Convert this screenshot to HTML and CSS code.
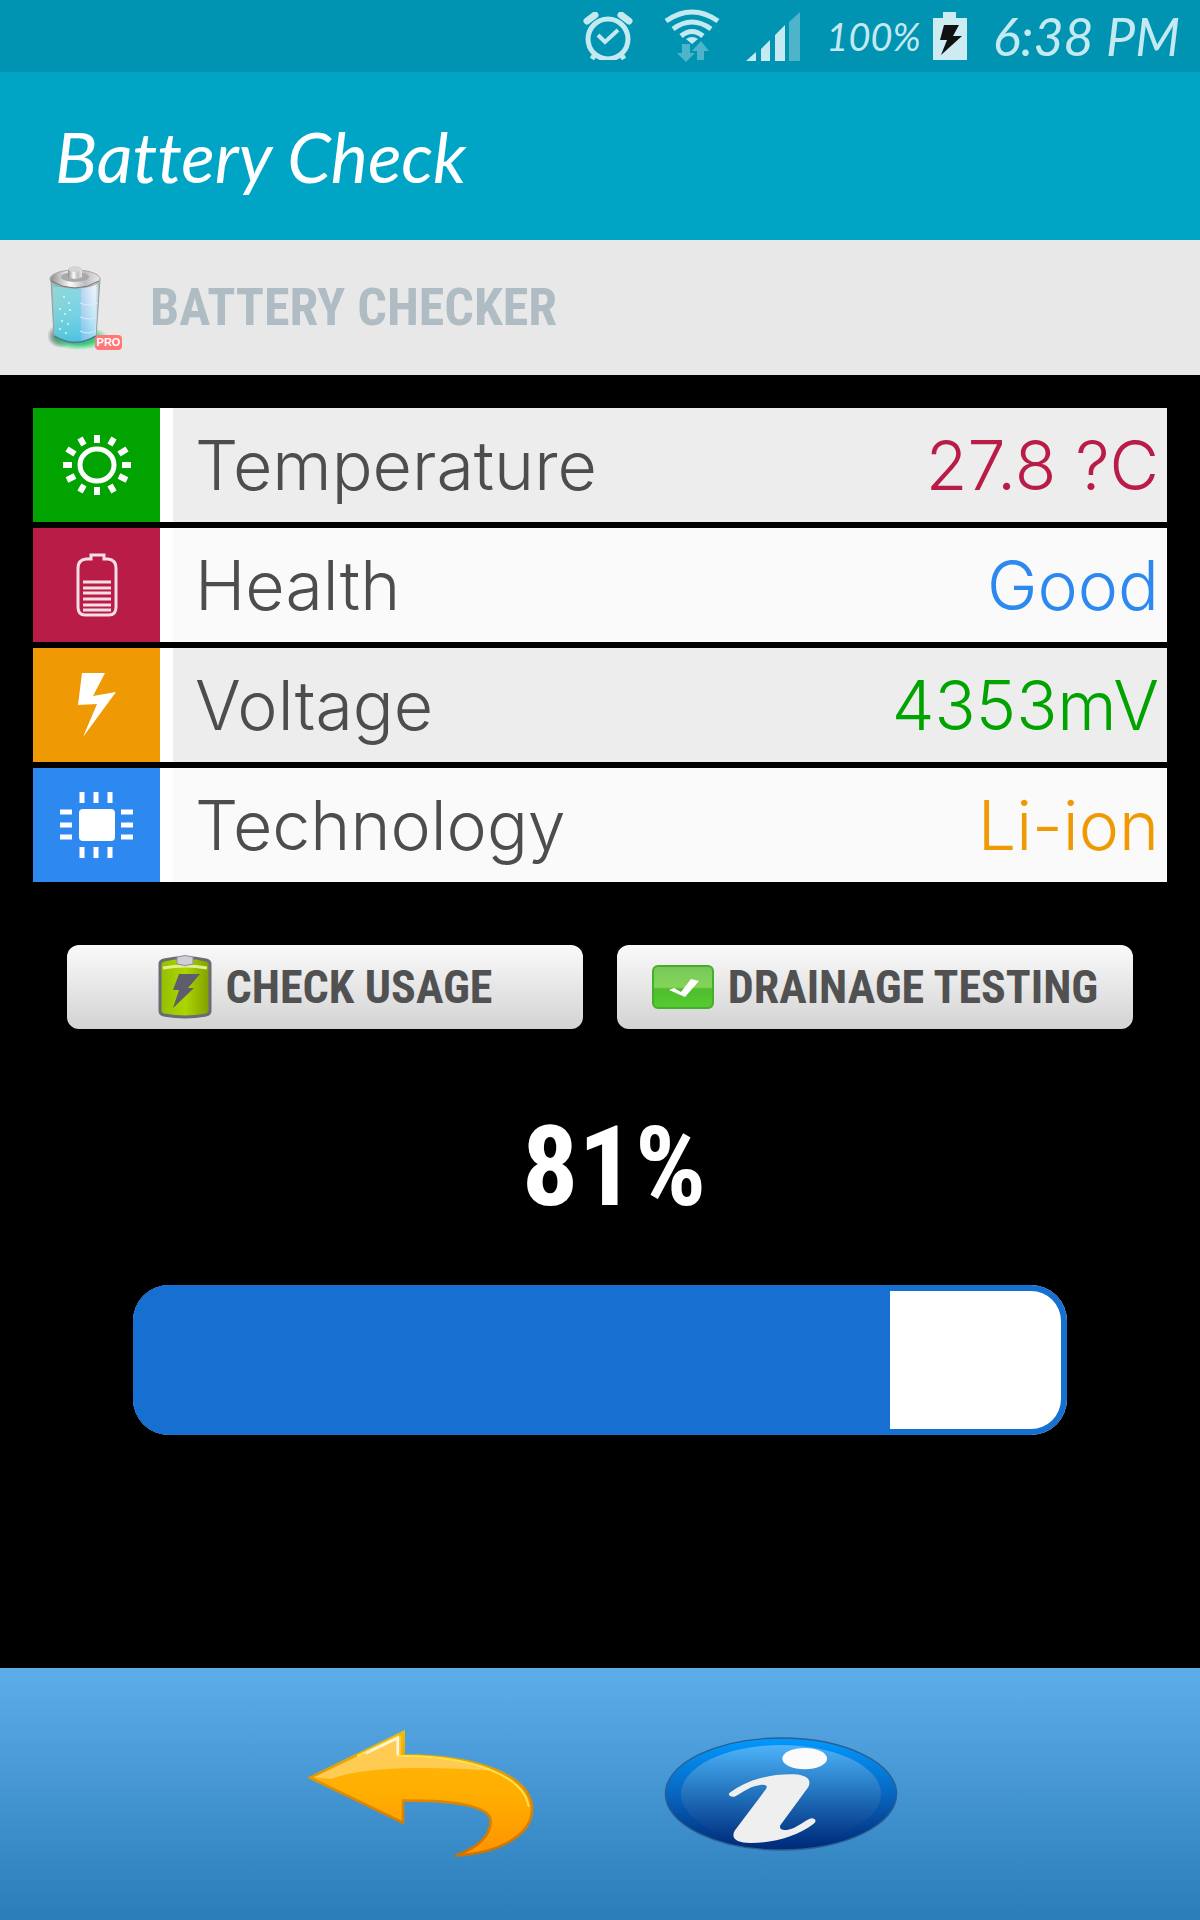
FILE: index.html
```html
<!DOCTYPE html>
<html lang="en">
<head>
    <meta charset="UTF-8">
    <meta name="viewport" content="width=device-width, initial-scale=1.0">
    <title>Battery Check</title>
    <link rel="stylesheet" href="styles.css">
</head>
<body>
    <div class="status-bar">
        <svg class="icon-alarm" width="50" height="48" viewBox="0 0 50 48" fill="none" stroke="#C4E9F0">
            <circle cx="25" cy="27" r="20" stroke-width="5"/>
            <path d="M15 23l7 7 13-12" stroke-width="4"/>
            <path d="M4 9l8-6M46 9l-8-6" stroke-width="7" stroke-linecap="round"/>
            <path d="M12 42l-3 5M38 42l3 5" stroke-width="5"/>
        </svg>
        <svg class="icon-wifi" width="56" height="54" viewBox="0 0 56 54" fill="none" stroke="#C4E9F0" stroke-width="5">
            <path d="M2 12Q28 -6 54 12"/>
            <path d="M9 20Q28 6 47 20"/>
            <path d="M17 27Q28 18 39 27"/>
            <path d="M22 30Q28 26 34 30L28 35z" fill="#C4E9F0" stroke="none"/>
            <path d="M18 35h8v9h5l-9 9-9-9h5zM33 51v-9h-5l9-10 8 10h-5v9z" fill="#4DB4CA" stroke="none"/>
        </svg>
        <svg class="icon-signal" width="54" height="49" viewBox="0 0 54 49" fill="#C4E9F0">
            <path d="M0 49l10-9v9zM15 37l9-9v21h-9zM29 23l10-10v36H29z"/>
            <path d="M43 10L54 0v49H43z" fill="#4DB4CA"/>
        </svg>
        <span class="charge">100%</span>
        <svg class="icon-charging" width="34" height="48" viewBox="0 0 34 48">
            <path d="M0 6h10V0h13v6h11v42H0z" fill="#CDECF2"/>
            <path d="M11 13h15l-6 11h9L8 43l6-15H7z" fill="#111"/>
        </svg>
        <span class="clock">6:38 PM</span>
    </div>

    <header class="app-bar">
        <h1>Battery Check</h1>
    </header>

    <div class="section-head">
        <div class="logo">
            <svg width="64" height="86" viewBox="0 0 64 86">
                <defs>
                    <linearGradient id="glass" x1="0" x2="1">
                        <stop offset="0" stop-color="#A9BEC2"/>
                        <stop offset=".1" stop-color="#6FCDCB"/>
                        <stop offset=".6" stop-color="#69CBE0"/>
                        <stop offset=".62" stop-color="#A9C9EC"/>
                        <stop offset=".9" stop-color="#E8F2FC"/>
                        <stop offset="1" stop-color="#A0AAB0"/>
                    </linearGradient>
                    <linearGradient id="liquid" x1="0" y1="0" x2="0" y2="1">
                        <stop offset="0" stop-color="#FFFFFF" stop-opacity=".2"/>
                        <stop offset="1" stop-color="#22B8E8" stop-opacity=".45"/>
                    </linearGradient>
                    <linearGradient id="metal" x1="0" x2="1">
                        <stop offset="0" stop-color="#8E8E8E"/>
                        <stop offset=".4" stop-color="#FAFAFA"/>
                        <stop offset=".7" stop-color="#BDBDBD"/>
                        <stop offset="1" stop-color="#E9E9E9"/>
                    </linearGradient>
                    <radialGradient id="glow">
                        <stop offset=".5" stop-color="#1ED56E"/>
                        <stop offset="1" stop-color="#1ED56E" stop-opacity="0"/>
                    </radialGradient>
                    <radialGradient id="shade">
                        <stop offset=".3" stop-color="#444" stop-opacity=".8"/>
                        <stop offset="1" stop-color="#444" stop-opacity="0"/>
                    </radialGradient>
                </defs>
                <ellipse cx="14" cy="71" rx="13" ry="12" fill="url(#shade)"/>
                <ellipse cx="33" cy="73" rx="30" ry="12" fill="url(#glow)"/>
                <path d="M5 14L8 72Q29 86 50 72L54 14z" fill="url(#glass)" stroke="#8FA0A5"/>
                <path d="M7 22L9 71Q29 83 49 71L52 22z" fill="url(#liquid)"/>
                <path d="M8 71Q29 84 50 71" fill="none" stroke="#4E7F86" stroke-width="2"/>
                <ellipse cx="29" cy="14" rx="25" ry="9" fill="url(#metal)" stroke="#A5A5A5"/>
                <path d="M5 16Q29 30 53 16" fill="none" stroke="#777"/>
                <ellipse cx="29" cy="12" rx="14" ry="5" fill="#A9A9A9"/>
                <path d="M22 4v8q7 4 14 0V4z" fill="url(#metal)"/>
                <ellipse cx="29" cy="4" rx="7" ry="3" fill="#D5D5D5"/>
                <path d="M34 38q9 4 18 0M34 52q9 4 17 0M34 66q8 4 16 0" fill="none" stroke="#DCEBFA"/>
                <g fill="#D8FAFA">
                    <circle cx="18" cy="32" r="1"/><circle cx="23" cy="38" r="1"/><circle cx="14" cy="44" r="1"/>
                    <circle cx="19" cy="49" r="1"/><circle cx="16" cy="56" r="1"/><circle cx="22" cy="59" r="1"/>
                    <circle cx="14" cy="64" r="1"/><circle cx="20" cy="68" r="1"/><circle cx="24" cy="45" r="1"/>
                </g>
            </svg>
            <span class="pro">PRO</span>
        </div>
        <h2>BATTERY CHECKER</h2>
    </div>

    <main>
        <table class="stats">
            <tr class="odd">
                <td class="tile green">
                    <svg width="68" height="60" viewBox="0 0 68 60" fill="none" stroke="#FFF" stroke-width="6">
                        <ellipse cx="34" cy="30" rx="17" ry="16" stroke-width="5"/>
                        <path d="M34 0v8M34 52v8M0 30h9M59 30h9M17 3l4 7M51 3l-4 7M17 57l4-7M51 57l-4-7M4 14l8 5M64 14l-8 5M4 45l8-4M64 45l-8-4"/>
                    </svg>
                </td>
                <th scope="row">Temperature</th>
                <td class="value red-text">27.8 ?C</td>
            </tr>
            <tr>
                <td class="tile red">
                    <svg width="42" height="64" viewBox="0 0 42 64" fill="none" stroke="#F6DEE5" stroke-width="3">
                        <path d="M15 6V2h13v4h4q8 1 8 9v39q0 8-7 8H9q-7 0-7-8V15q0-8 8-9z"/>
                        <path d="M7 29h28M7 35h28M7 40h28M7 46h28M7 52h28M7 57h28"/>
                    </svg>
                </td>
                <th scope="row">Health</th>
                <td class="value blue-text">Good</td>
            </tr>
            <tr class="odd">
                <td class="tile orange">
                    <svg width="38" height="64" viewBox="0 0 38 64" fill="#FFF">
                        <path d="M4 0h23L15 23l23-4L5 64 19 31 0 32z"/>
                    </svg>
                </td>
                <th scope="row">Voltage</th>
                <td class="value green-text">4353mV</td>
            </tr>
            <tr>
                <td class="tile blue">
                    <svg width="74" height="66" viewBox="0 0 74 66" fill="#FFF" stroke="#FFF">
                        <rect x="19" y="17" width="36" height="32" rx="4" stroke="none"/>
                        <path d="M22 0v11M36 0v11M50 0v11M22 55v11M36 55v11M50 55v11M0 20h12M0 33h12M0 45h12M61 20h12M61 33h12M61 45h12" stroke-width="5"/>
                    </svg>
                </td>
                <th scope="row">Technology</th>
                <td class="value orange-text">Li-ion</td>
            </tr>
        </table>

        <div class="actions">
            <button type="button">
                <svg width="54" height="64" viewBox="0 0 54 64">
                    <defs>
                        <linearGradient id="cell" x1="0" x2="1">
                            <stop offset="0" stop-color="#93BE00"/>
                            <stop offset=".5" stop-color="#ACD600"/>
                            <stop offset="1" stop-color="#7F9E00"/>
                        </linearGradient>
                    </defs>
                    <path d="M2 9Q2 6 6 5 27 0 48 5 52 6 52 9V56Q52 59 48 60 27 64 6 60 2 59 2 56z" fill="url(#cell)" stroke="#6B6B77" stroke-width="3"/>
                    <path d="M5 13Q27 9 49 13" fill="none" stroke="#E3F08A" stroke-width="3"/>
                    <path d="M19 2q8-3 16 0v7q-8 3-16 0z" fill="#CFCFD8" stroke="#8D8D99"/>
                    <path d="M21 19h21L30 33h6L15 53l6-18h-6z" fill="#5D5D6B"/>
                </svg>
                CHECK USAGE
            </button>
            <button type="button">
                <svg width="62" height="44" viewBox="0 0 62 44">
                    <defs>
                        <linearGradient id="tick" x1="0" y1="0" x2="0" y2="1">
                            <stop offset="0" stop-color="#76C75A"/>
                            <stop offset=".5" stop-color="#84D459"/>
                            <stop offset=".55" stop-color="#50BC2E"/>
                            <stop offset="1" stop-color="#55CC30"/>
                        </linearGradient>
                    </defs>
                    <rect x="1" y="1" width="60" height="42" rx="5" fill="url(#tick)" stroke="#45AE2A" stroke-width="2"/>
                    <path d="M17 25l5-2 7 4 10-13 8 2-14 16z" fill="#FFF"/>
                </svg>
                DRAINAGE TESTING
            </button>
        </div>

        <div class="level">81%</div>
        <div class="bar" role="progressbar" aria-label="Battery level" aria-valuenow="81" aria-valuemin="0" aria-valuemax="100">
            <div class="bar-fill" style="width: 81%"></div>
        </div>
    </main>

    <footer class="bottom-bar">
        <button type="button" aria-label="Back">
            <svg width="226" height="128" viewBox="52 62 678 384">
                <defs>
                    <linearGradient id="arrow" x1="0" y1="0" x2="0" y2="1">
                        <stop offset="0" stop-color="#FFB90A"/>
                        <stop offset=".5" stop-color="#FFAE00"/>
                        <stop offset="1" stop-color="#FF9300"/>
                    </linearGradient>
                    <linearGradient id="arrowEdge" x1="0" y1="0" x2="0" y2="1">
                        <stop offset="0" stop-color="#E8BE0C"/>
                        <stop offset=".5" stop-color="#DD8A05"/>
                        <stop offset="1" stop-color="#CF7200"/>
                    </linearGradient>
                </defs>
                <path d="M58 205L339 68v70C560 138 724 200 724 300 724 380 620 432 495 439 560 415 600 380 600 335 600 290 490 272 337 274v66z" fill="url(#arrow)" stroke="url(#arrowEdge)" stroke-width="8"/>
                <path d="M70 204L330 79v64C460 143 560 158 610 184 450 176 250 164 120 209z" fill="#FFCB52"/>
                <path d="M200 140L322 82v58h20C550 142 700 200 714 292" fill="none" stroke="#FFE14A" stroke-width="6"/>
                <path d="M225 132L321 86v52" fill="none" stroke="#FFF5DC" stroke-width="8"/>
            </svg>
        </button>
        <button type="button" aria-label="Info">
            <svg width="234" height="114" viewBox="39 80 702 342">
                <defs>
                    <linearGradient id="rim" x1="0" y1="0" x2="0" y2="1">
                        <stop offset="0" stop-color="#0099FF"/>
                        <stop offset=".5" stop-color="#0866BF"/>
                        <stop offset="1" stop-color="#002A75"/>
                    </linearGradient>
                    <linearGradient id="disc" x1="0" y1="0" x2="0" y2="1">
                        <stop offset="0" stop-color="#4DB3FA"/>
                        <stop offset=".5" stop-color="#2272BC"/>
                        <stop offset="1" stop-color="#002F80"/>
                    </linearGradient>
                </defs>
                <ellipse cx="390" cy="251" rx="347" ry="168" fill="url(#rim)" stroke="#2B5F92" stroke-width="4"/>
                <ellipse cx="390" cy="251" rx="300" ry="147" fill="url(#disc)"/>
                <ellipse cx="461" cy="145" rx="67" ry="32" fill="#FBFBFB"/>
                <path d="M236 247C285 210 350 192 420 192 462 192 484 204 472 230L388 345C382 360 402 364 430 352 455 340 470 325 484 324 496 326 496 334 488 340 440 376 370 398 300 398 255 398 238 384 252 360L345 236C354 222 336 220 310 228 280 238 262 256 250 259 236 260 230 253 236 247z" fill="#EFEFF0"/>
            </svg>
        </button>
    </footer>
</body>
</html>
```
FILE: styles.css
```css
* {
    box-sizing: border-box;
}
body {
    margin: 0;
    min-height: 100vh;
    display: flex;
    flex-direction: column;
    background-color: #000000;
    font-family: Inter, "Liberation Sans", sans-serif;
}
svg {
    display: block;
    flex: none;
}
button {
    border: none;
    cursor: pointer;
}

/* top bars */
.status-bar {
    height: 72px;
    padding-right: 20px;
    display: flex;
    justify-content: flex-end;
    align-items: center;
    background-color: #0094B2;
    color: #C4E9F0;
    font-family: Lato, sans-serif;
    font-style: italic;
}
.icon-wifi {
    margin-left: 31px;
}
.icon-signal {
    margin-left: 26px;
}
.charge {
    margin-left: 26px;
    font-size: 38px;
}
.icon-charging {
    margin-left: 12px;
}
.clock {
    margin-left: 26px;
    font-size: 52px;
}
.app-bar {
    height: 168px;
    padding: 0 55px;
    display: flex;
    align-items: center;
    background-color: #00A5C5;
}
h1 {
    margin: 0;
    color: #FFFFFF;
    font-family: Lato, sans-serif;
    font-size: 70px;
    font-style: italic;
    font-weight: normal;
    font-variant-ligatures: none;
}
.section-head {
    height: 135px;
    padding: 0 46px;
    display: flex;
    align-items: center;
    background-color: #E8E8E8;
}
.logo {
    position: relative;
    width: 76px;
    margin-right: 28px;
}
.pro {
    position: absolute;
    right: 0;
    bottom: 1px;
    width: 27px;
    border-radius: 4px;
    background-color: #FF7777;
    color: #FFFFFF;
    font: bold 11px/15px "Liberation Sans", sans-serif;
    text-align: center;
}
h2 {
    margin: 0;
    color: #B0BCC3;
    font-family: "Roboto Condensed", "Liberation Sans Narrow", sans-serif;
    font-size: 52px;
    font-weight: bold;
}

/* readings */
main {
    flex: 1;
    padding: 27px 33px;
}
.stats {
    width: 100%;
    border-collapse: separate;
    border-spacing: 0 6px;
    font-size: 68px;
    line-height: 72px;
}
.stats tr {
    height: 114px;
    background-color: #FAFAFA;
}
.stats tr.odd {
    background-color: #EDEDED;
}
.stats td, .stats th {
    padding: 0;
}
.stats th {
    padding-left: 22px;
    border-left: 13px solid #FFFFFF;
    color: #4D4D4D;
    font-weight: 300;
    text-align: left;
}
.stats .tile {
    width: 127px;
}
.tile svg {
    margin: 0 auto;
}
.stats .value {
    padding-right: 8px;
    font-weight: 300;
    text-align: right;
}
.green { background-color: #00A300; }
.red { background-color: #B91D47; }
.orange { background-color: #EF9A05; }
.blue { background-color: #2D89EF; }
.green-text { color: #00A300; }
.red-text { color: #B91D47; }
.orange-text { color: #EF9A05; }
.blue-text { color: #2D89EF; }

.actions {
    display: flex;
    gap: 34px;
    margin-top: 57px;
    padding: 0 34px;
}
.actions button {
    flex: 1;
    height: 84px;
    padding: 0;
    display: flex;
    justify-content: center;
    align-items: center;
    gap: 14px;
    border-radius: 12px;
    background: linear-gradient(#FAFAFA, #D3D3D3);
    color: #515151;
    font-family: "Roboto Condensed", "Liberation Sans Narrow", sans-serif;
    font-size: 46px;
    font-weight: bold;
    white-space: nowrap;
}
.level {
    margin-top: 72px;
    padding-left: 28px;
    color: #FFFFFF;
    font-family: "Roboto Condensed", "Liberation Sans Narrow", sans-serif;
    font-size: 112px;
    font-weight: bold;
    line-height: 132px;
    text-align: center;
}
.bar {
    height: 150px;
    margin: 52px 100px 0;
    overflow: hidden;
    border-radius: 36px;
    background-color: #FFFFFF;
    box-shadow: inset 0 0 0 6px #176FD1;
}
.bar-fill {
    height: 100%;
    background-color: #176FD1;
}

.bottom-bar {
    height: 252px;
    padding-left: 6px;
    display: flex;
    justify-content: center;
    align-items: center;
    gap: 130px;
    background: linear-gradient(#5DADE9, #2A7DB9);
}
.bottom-bar button {
    padding: 0;
    background: none;
}
```
